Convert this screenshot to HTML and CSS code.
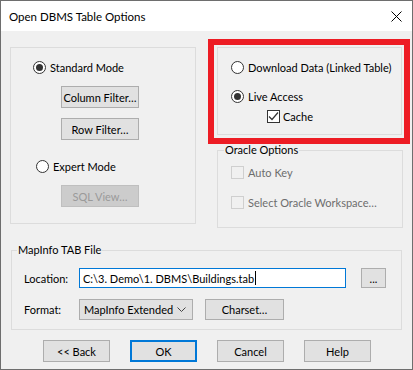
FILE: index.html
```html
<!DOCTYPE html>
<html lang="en">
<head>
    <meta charset="UTF-8">
    <title>Open DBMS Table Options</title>
    <link rel="stylesheet" href="styles.css">
</head>
<body>
    <div class="window">
        <div class="titlebar">
            <span class="title">Open DBMS Table Options</span>
            <svg class="close" width="11" height="11" viewBox="0 0 11 11">
                <path d="M0.5 0.5 L10.5 10.5 M10.5 0.5 L0.5 10.5" stroke="#000" stroke-width="1"/>
            </svg>
        </div>

        <div class="dialog">
            <div class="top-row">
                <div class="group mode-group">
                    <div class="option">
                        <span class="radio checked"></span>Standard Mode
                    </div>
                    <button class="btn filter-btn first">Column Filter…</button>
                    <button class="btn filter-btn">Row Filter…</button>
                    <div class="option expert">
                        <span class="radio"></span>Expert Mode
                    </div>
                    <button class="btn filter-btn sql" disabled>SQL View…</button>
                </div>

                <div class="right-col">
                    <div class="group access-group">
                        <div class="option">
                            <span class="radio"></span>Download Data (Linked Table)
                        </div>
                        <div class="option live">
                            <span class="radio checked"></span>Live Access
                        </div>
                        <div class="option cache">
                            <span class="check checked">
                                <svg width="11" height="11" viewBox="0 0 11 11">
                                    <path d="M1 5.5 L4 8.5 L10 1.5" fill="none" stroke="#333" stroke-width="1.2"/>
                                </svg>
                            </span>Cache
                        </div>
                    </div>

                    <div class="group oracle-group">
                        <div class="caption">Oracle Options</div>
                        <div class="option disabled">
                            <span class="check"></span>Auto Key
                        </div>
                        <div class="option disabled workspace">
                            <span class="check"></span>Select Oracle Workspace…
                        </div>
                    </div>
                </div>
            </div>

            <div class="group tab-group">
                <div class="caption">MapInfo TAB File</div>
                <div class="field-row">
                    <label for="location">Location:</label>
                    <div class="text-input" id="location">C:\3. Demo\1. DBMS\Buildings.tab<span class="caret"></span></div>
                    <button class="btn browse">...</button>
                </div>
                <div class="field-row format-row">
                    <label>Format:</label>
                    <div class="combo">
                        MapInfo Extended
                        <svg width="9" height="5" viewBox="0 0 9 5">
                            <path d="M0.5 0.5 L4.5 4.5 L8.5 0.5" fill="none" stroke="#444" stroke-width="1"/>
                        </svg>
                    </div>
                    <button class="btn charset">Charset…</button>
                </div>
            </div>

            <div class="buttons">
                <button class="btn action">&lt;&lt; Back</button>
                <button class="btn action default">OK</button>
                <button class="btn action">Cancel</button>
                <button class="btn action">Help</button>
            </div>
        </div>

        <div class="highlight"></div>
    </div>
</body>
</html>
```
FILE: styles.css
```css
body {
    margin: 0;
    font-family: Lato, "Liberation Sans", sans-serif;
    font-size: 11px;
    color: #000;
}

.window {
    position: relative;
    width: 413px;
    height: 370px;
    box-sizing: border-box;
    border: 1px solid #6e6e6e;
    background: #f0f0f0;
}

.titlebar {
    height: 30px;
    background: #fff;
    display: flex;
    align-items: center;
    padding: 0 9px 0 8px;
}

.title {
    flex: 1;
    font-size: 11.5px;
}

.close {
    margin-right: 1px;
}

.dialog {
    padding: 16px 0 0 9px;
}

.top-row {
    display: flex;
    gap: 21px;
}

.group {
    border: 1px solid #dcdcdc;
    box-sizing: border-box;
}

.caption {
    display: table;
    margin: -9px 0 0 6px;
    padding: 0 1px;
    line-height: 16px;
    background: #f0f0f0;
}

.option {
    display: flex;
    align-items: center;
    height: 16px;
    gap: 4px;
}

.radio {
    width: 13px;
    height: 13px;
    box-sizing: border-box;
    border: 1px solid #333;
    border-radius: 50%;
    background: #fff;
    display: flex;
    align-items: center;
    justify-content: center;
}

.radio.checked::after {
    content: "";
    width: 7px;
    height: 7px;
    border-radius: 50%;
    background: #333;
}

.check {
    width: 13px;
    height: 13px;
    box-sizing: border-box;
    border: 1px solid #333;
    background: #fff;
    display: flex;
    align-items: center;
    justify-content: center;
}

.option.disabled {
    color: #6d6d6d;
}

.option.disabled .check {
    border-color: #cfcfcf;
    background: #f0f0f0;
}

.btn {
    font-family: inherit;
    font-size: 11px;
    color: #000;
    background: #e1e1e1;
    border: 1px solid #adadad;
    box-sizing: border-box;
    padding: 0;
    height: 22px;
}

.btn:disabled {
    background: #cccccc;
    border-color: #bfbfbf;
    color: #9a9a9a;
}

/* left group */
.mode-group {
    width: 186px;
    height: 177px;
    padding: 11px 0 0 22px;
    display: flex;
    flex-direction: column;
    align-items: flex-start;
}

.filter-btn {
    width: 78px;
    margin: 10px 0 0 28px;
}

.filter-btn.first {
    margin-top: 11px;
}

.option.expert {
    margin: 18px 0 0 3px;
}

.filter-btn.sql {
    margin-top: 11px;
}

/* right column */
.right-col {
    display: flex;
    flex-direction: column;
}

.access-group {
    width: 185px;
    height: 88px;
    padding: 11px 0 0 13px;
}

.option.live {
    margin-top: 13px;
}

.option.cache {
    margin: 4px 0 0 36px;
    gap: 3px;
}

.oracle-group {
    width: 186px;
    height: 78px;
    margin-top: 15px;
    padding-left: 13px;
}

.oracle-group .caption {
    margin-left: -7px;
}

.oracle-group .option {
    margin-top: 6px;
}

.oracle-group .option.workspace {
    margin-top: 14px;
}

/* tab file group */
.tab-group {
    width: 391px;
    height: 80px;
    margin: 22px 0 0 1px;
    padding-left: 12px;
}

.tab-group .caption {
    margin-left: -7px;
}

.field-row {
    display: flex;
    align-items: center;
    margin-top: 10px;
}

.field-row.format-row {
    margin-top: 11px;
}

.field-row label {
    width: 55px;
}

.text-input {
    width: 267px;
    height: 20px;
    box-sizing: border-box;
    border: 1px solid #0078d7;
    background: #fff;
    padding-left: 3px;
    display: flex;
    align-items: center;
}

.caret {
    width: 1px;
    height: 14px;
    background: #000;
    margin-left: 1px;
}

.browse {
    width: 25px;
    height: 20px;
    margin-left: 15px;
}

.combo {
    width: 114px;
    height: 21px;
    box-sizing: border-box;
    border: 1px solid #adadad;
    background: #e1e1e1;
    display: flex;
    align-items: center;
    justify-content: space-between;
    padding: 0 6px 0 4px;
}

.charset {
    width: 79px;
    height: 21px;
    margin-left: 12px;
}

/* bottom buttons */
.buttons {
    display: flex;
    gap: 20px;
    margin: 10px 0 0 33px;
}

.action {
    width: 67px;
}

.action.default {
    border: 2px solid #0078d7;
}

/* red annotation frame drawn over the dialog */
.highlight {
    position: absolute;
    left: 207px;
    top: 38px;
    width: 202px;
    height: 105px;
    box-sizing: border-box;
    border: 6px solid #ed1c24;
}
```
